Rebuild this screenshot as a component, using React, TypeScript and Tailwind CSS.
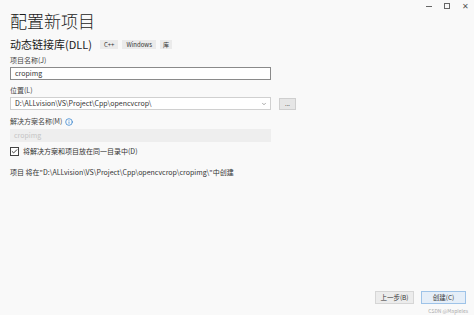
import { Info, Check, ChevronDown } from "lucide-react";

const font = { fontFamily: '"Noto Sans CJK SC", "Noto Sans", sans-serif' };

function Label({ text }: { text: string }) {
    return <div className="text-[7px] leading-[9px] text-[#444]">{text}</div>;
}

function App() {
    return (
        <div style={font} className="w-[474px] h-[315px] bg-[#f9f9f9] flex flex-col text-[#1b1b1b] overflow-hidden">
            <div className="flex justify-end items-center h-[10px] pr-[5px] gap-[12px] text-[8px] text-[#555] mt-[1px]">
                <span className="w-[6px] h-px bg-[#666]"></span>
                <span className="w-[6px] h-[6px] border border-[#666]"></span>
                <span className="leading-none">✕</span>
            </div>
            <div className="pl-[10px] text-[17px] leading-[20px] font-light">配置新项目</div>
            <div className="flex items-center pl-[10px] mt-[6px] gap-[8px]">
                <span className="text-[11px] leading-[14px]">动态链接库(DLL)</span>
                <div className="flex gap-[4px] text-[6px] leading-[9px] text-[#333]">
                    <span className="bg-[#ebebeb] px-[4px]">C++</span>
                    <span className="bg-[#ebebeb] px-[4px]">Windows</span>
                    <span className="bg-[#ebebeb] px-[3px]">库</span>
                </div>
            </div>
            <div className="pl-[10px] mt-[5px] flex flex-col">
                <Label text="项目名称(J)" />
                <div className="mt-[2px] w-[261px] h-[13px] border border-[#8a8a8a] bg-white text-[7px] leading-[11px] pl-[4px] text-[#333]">cropimg</div>
                <div className="mt-[6px]"><Label text="位置(L)" /></div>
                <div className="mt-[2px] flex items-center gap-[8px]">
                    <div className="w-[261px] h-[13px] border border-[#d0d0d0] bg-white text-[7px] leading-[11px] pl-[4px] text-[#333] flex justify-between items-center pr-[3px]">
                        <span>D:\ALLvision\VS\Project\Cpp\opencvcrop\</span>
                        <ChevronDown size={6} strokeWidth={2} className="text-[#555]" />
                    </div>
                    <div className="w-[17px] h-[12px] bg-[#e6e6e6] border border-[#cfcfcf] text-[6px] leading-[8px] flex justify-center items-end pb-[1px]">...</div>
                </div>
                <div className="mt-[7px] flex items-center gap-[3px]">
                    <Label text="解决方案名称(M)" />
                    <Info size={8} strokeWidth={2} className="text-[#1a73c8]" />
                </div>
                <div className="mt-[3px] w-[261px] h-[13px] bg-[#eeeeee] text-[7px] leading-[13px] pl-[4px] text-[#c4c4c4]">cropimg</div>
                <div className="mt-[5px] flex items-center gap-[4px]">
                    <div className="w-[9px] h-[9px] border border-[#444] bg-white flex items-center justify-center">
                        <Check size={7} strokeWidth={3} className="text-[#222]" />
                    </div>
                    <span className="text-[7px] leading-[9px] text-[#333]">将解决方案和项目放在同一目录中(D)</span>
                </div>
                <div className="mt-[12px] text-[7px] leading-[9px] text-[#333]">项目 将在"D:\ALLvision\VS\Project\Cpp\opencvcrop\cropimg\"中创建</div>
            </div>
            <div className="flex-1"></div>
            <div className="flex justify-end gap-[7px] pr-[8px]">
                <div className="w-[39px] h-[13px] bg-[#ececec] border border-[#d6d6d6] text-[6.5px] leading-[11px] text-center text-[#333]">上一步(B)</div>
                <div className="w-[45px] h-[13px] bg-[#e5eef8] border border-[#9ec3e8] text-[6.5px] leading-[11px] text-center text-[#333]">创建(C)</div>
            </div>
            <div className="flex justify-end pr-[6px] mt-[3px] mb-[1px] text-[5px] leading-[7px] text-[#aaa]">CSDN @Mapleles</div>
        </div>
    );
}

export default App;
